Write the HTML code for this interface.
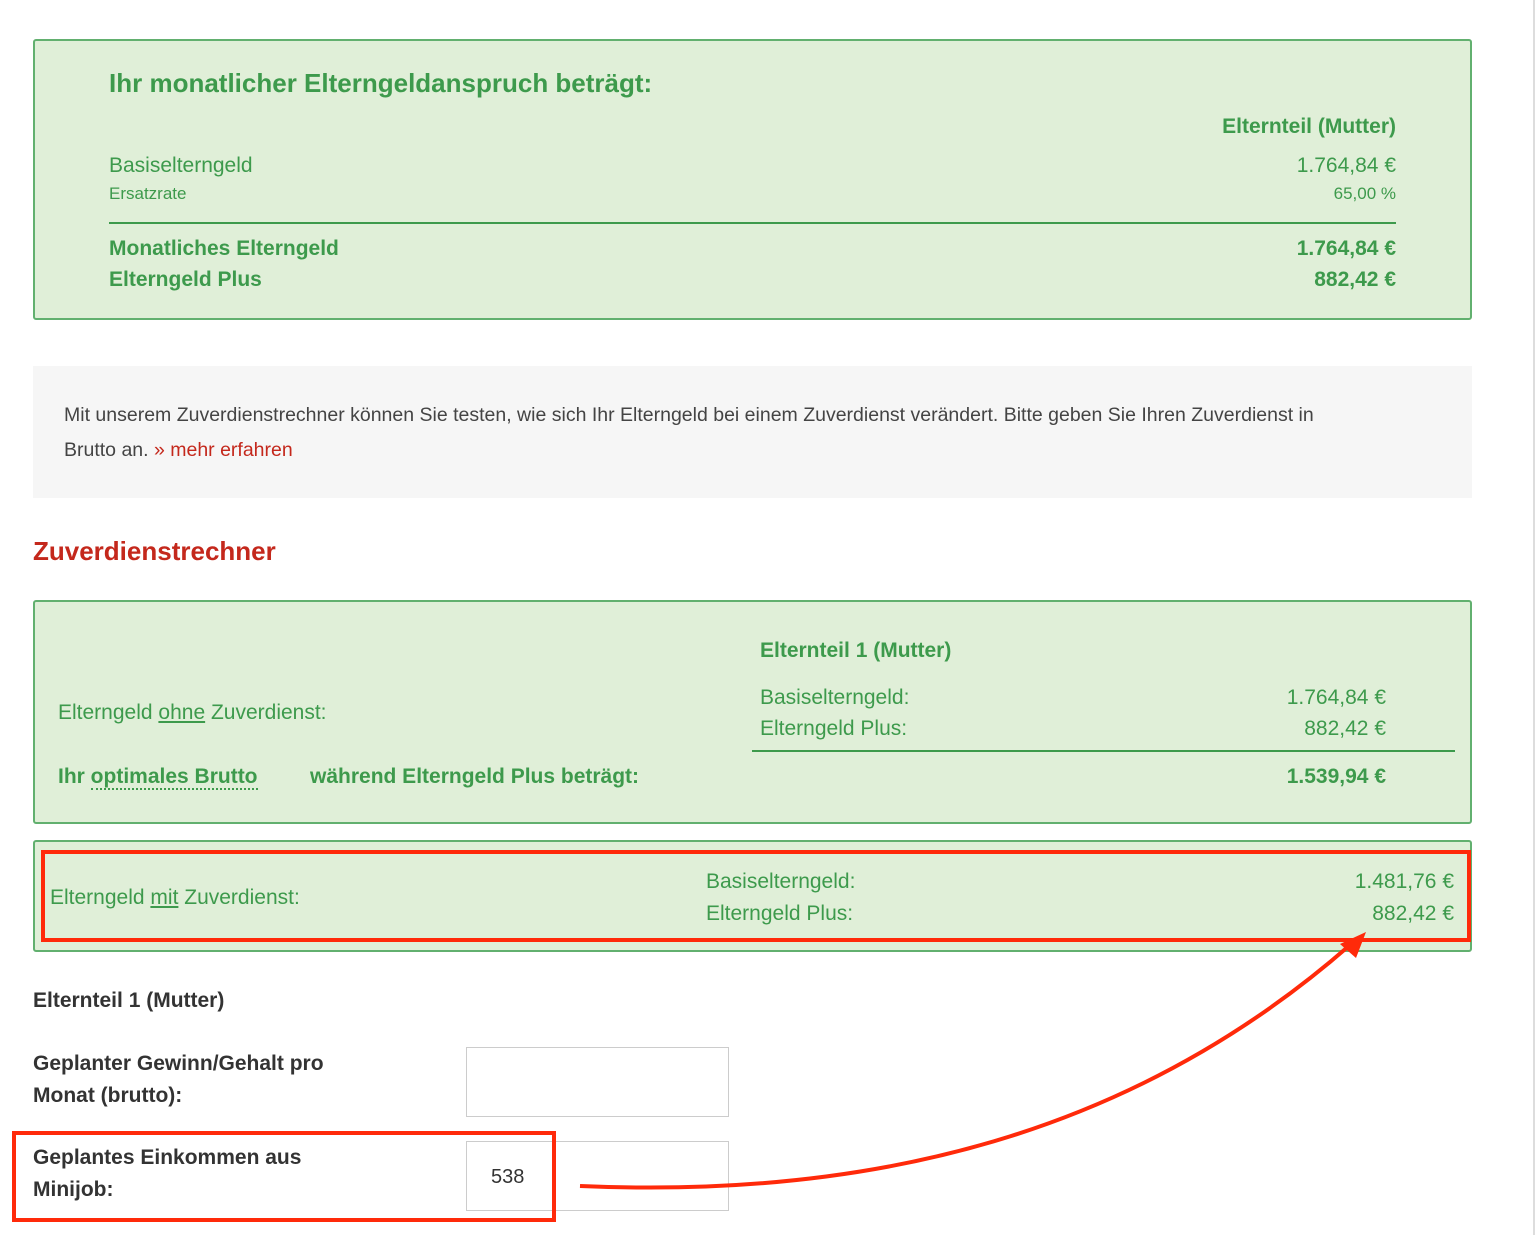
<!DOCTYPE html>
<html><head><meta charset="utf-8"><style>
*{margin:0;padding:0;box-sizing:border-box}
body{width:1536px;height:1235px;background:#fff;font-family:"Liberation Sans",sans-serif;position:relative;overflow:hidden;color:#3d9a4c}
.a{position:absolute;white-space:nowrap}
.box{position:absolute;background:#e0efd8;border:2px solid #62b06f;border-radius:3px}
.b{font-weight:bold}
.r{text-align:right}
u{text-decoration:underline}
</style></head><body>
<div style="position:absolute;left:1533px;top:0;width:2px;height:1235px;background:#ddd"></div>

<div class="box" style="left:33px;top:39px;width:1439px;height:281px"></div>
<div class="a b" style="left:109px;top:68px;font-size:26px">Ihr monatlicher Elterngeldanspruch beträgt:</div>
<div class="a b r" style="right:140px;top:115px;font-size:21px">Elternteil (Mutter)</div>
<div class="a" style="left:109px;top:154px;font-size:21px">Basiselterngeld</div>
<div class="a r" style="right:140px;top:154px;font-size:21px">1.764,84 €</div>
<div class="a" style="left:109px;top:184px;font-size:17px">Ersatzrate</div>
<div class="a r" style="right:140px;top:184px;font-size:17px">65,00 %</div>
<div class="a" style="left:109px;top:222px;width:1287px;height:2px;background:#3d9a4c"></div>
<div class="a b" style="left:109px;top:237px;font-size:21px">Monatliches Elterngeld</div>
<div class="a b r" style="right:140px;top:237px;font-size:21px">1.764,84 €</div>
<div class="a b" style="left:109px;top:268px;font-size:21px">Elterngeld Plus</div>
<div class="a b r" style="right:140px;top:268px;font-size:21px">882,42 €</div>

<div style="position:absolute;left:33px;top:366px;width:1439px;height:132px;background:#f6f6f6"></div>
<div class="a" style="left:64px;top:398px;font-size:19.5px;color:#444;line-height:35px">Mit unserem Zuverdienstrechner können Sie testen, wie sich Ihr Elterngeld bei einem Zuverdienst verändert. Bitte geben Sie Ihren Zuverdienst in<br>Brutto an. <span style="color:#c4281c">» mehr erfahren</span></div>

<div class="a b" style="left:33px;top:536px;font-size:26px;color:#c4281c">Zuverdienstrechner</div>

<div class="box" style="left:33px;top:600px;width:1439px;height:224px"></div>
<div class="a b" style="left:760px;top:639px;font-size:21px">Elternteil 1 (Mutter)</div>
<div class="a" style="left:58px;top:701px;font-size:21px">Elterngeld <u>ohne</u> Zuverdienst:</div>
<div class="a" style="left:760px;top:686px;font-size:21px">Basiselterngeld:</div>
<div class="a r" style="right:150px;top:686px;font-size:21px">1.764,84 €</div>
<div class="a" style="left:760px;top:717px;font-size:21px">Elterngeld Plus:</div>
<div class="a r" style="right:150px;top:717px;font-size:21px">882,42 €</div>
<div class="a" style="left:752px;top:750px;width:703px;height:2px;background:#3d9a4c"></div>
<div class="a b" style="left:58px;top:765px;font-size:21px">Ihr <span style="border-bottom:2px dotted #3d9a4c">optimales Brutto</span></div>
<div class="a b" style="left:310px;top:765px;font-size:21px">während Elterngeld Plus beträgt:</div>
<div class="a b r" style="right:150px;top:765px;font-size:21px">1.539,94 €</div>

<div class="box" style="left:33px;top:840px;width:1439px;height:112px"></div>
<div class="a" style="left:41px;top:850px;width:1430px;height:92px;border:4px solid #ff2a0a"></div>
<div class="a" style="left:50px;top:886px;font-size:21px">Elterngeld <u>mit</u> Zuverdienst:</div>
<div class="a" style="left:706px;top:870px;font-size:21px">Basiselterngeld:</div>
<div class="a r" style="right:82px;top:870px;font-size:21px">1.481,76 €</div>
<div class="a" style="left:706px;top:902px;font-size:21px">Elterngeld Plus:</div>
<div class="a r" style="right:82px;top:902px;font-size:21px">882,42 €</div>

<div class="a b" style="left:33px;top:989px;font-size:21px;color:#333">Elternteil 1 (Mutter)</div>
<div class="a b" style="left:33px;top:1048px;font-size:21px;color:#333;line-height:32px">Geplanter Gewinn/Gehalt pro<br>Monat (brutto):</div>
<div class="a" style="left:466px;top:1047px;width:263px;height:70px;border:1px solid #ccc;background:#fff"></div>
<div class="a b" style="left:33px;top:1142px;font-size:21px;color:#333;line-height:32px">Geplantes Einkommen aus<br>Minijob:</div>
<div class="a" style="left:466px;top:1141px;width:263px;height:70px;border:1px solid #ccc;background:#fff"></div>
<div class="a" style="left:491px;top:1166px;font-size:20px;color:#333">538</div>
<div class="a" style="left:12px;top:1131px;width:544px;height:91px;border:4px solid #ff2a0a"></div>

<svg class="a" style="left:0;top:0" width="1536" height="1235">
<path d="M580 1186 C 900 1200, 1150 1120, 1350 945" fill="none" stroke="#ff2a0a" stroke-width="4"/>
<polygon points="1366,932 1356,958 1340,944" fill="#ff2a0a"/>
</svg>
</body></html>
